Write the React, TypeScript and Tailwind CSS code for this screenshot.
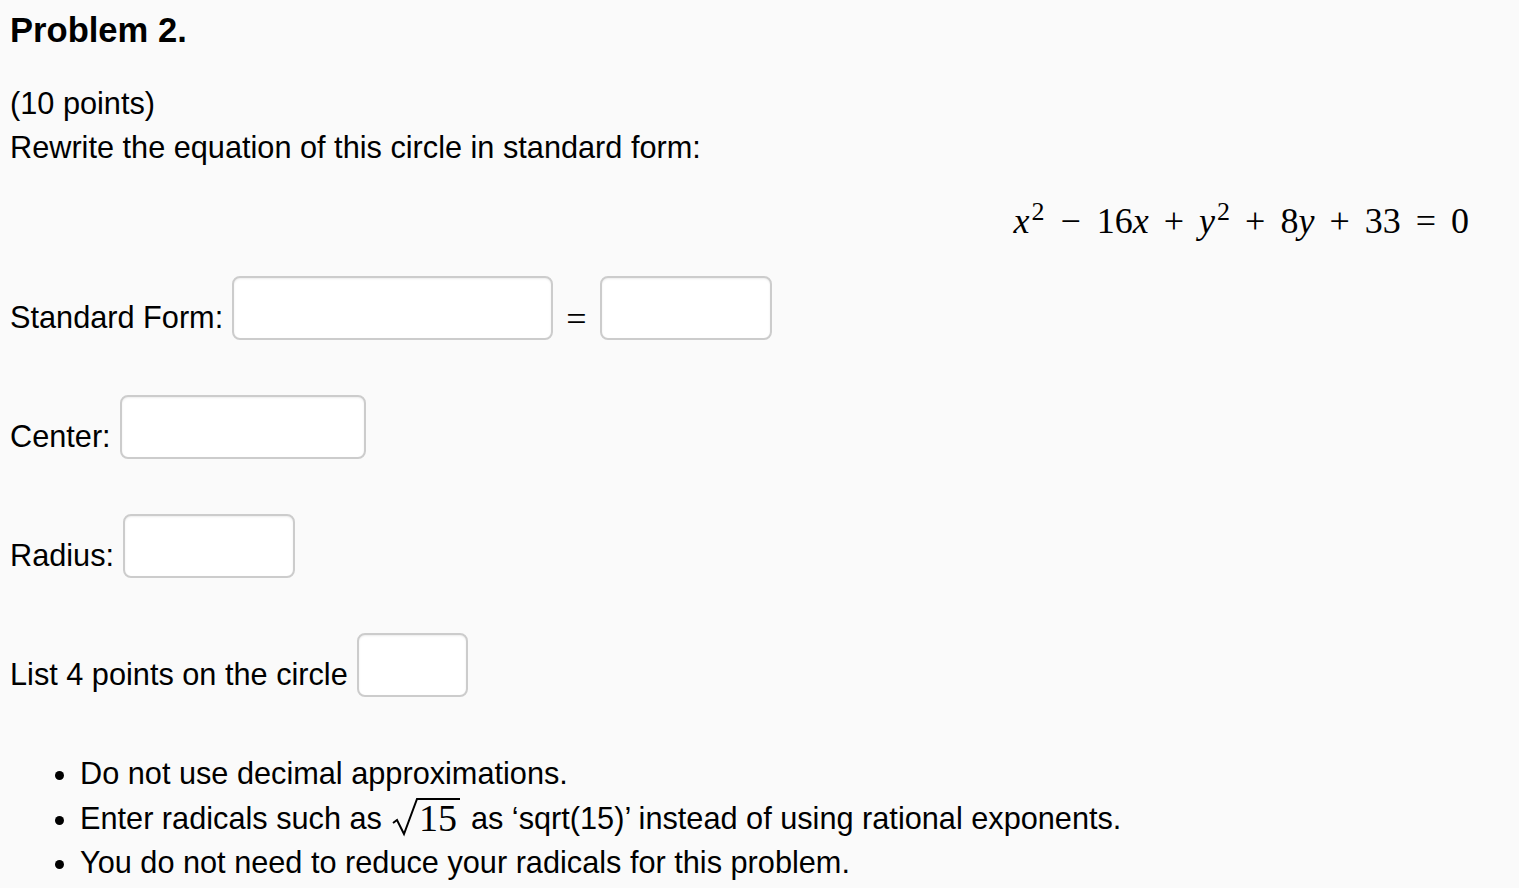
const serif = "font-['Liberation_Serif',serif]";

const Box = ({ w }: { w: string }) => (
  <input
    type="text"
    className={`${w} h-[64px] rounded-[8px] border-2 border-[#cccccc] bg-white shadow-[inset_0_1px_2px_rgba(0,0,0,0.08)] outline-none`}
  />
);

const Row = ({ label, children }: { label: string; children: React.ReactNode }) => (
  <div className="flex items-end">
    <span className="leading-[44px] mr-[9px]">{label}</span>
    {children}
  </div>
);

const Sup = ({ children }: { children: React.ReactNode }) => (
  <span className="text-[26px] relative -top-[13px] ml-[2px]">{children}</span>
);

const Equation = () => (
  <div className={`${serif} text-[36px] leading-none flex items-baseline`}>
    <i>x</i>
    <Sup>2</Sup>
    <span className="mx-[16px]">−</span>
    <span>16</span>
    <i>x</i>
    <span className="mx-[15px]">+</span>
    <i>y</i>
    <Sup>2</Sup>
    <span className="mx-[15px]">+</span>
    <span>8</span>
    <i>y</i>
    <span className="mx-[15px]">+</span>
    <span>33</span>
    <span className="mx-[15px]">=</span>
    <span>0</span>
  </div>
);

const Sqrt15 = () => (
  <span className="inline-flex items-end align-[-8px] ml-[9px] mr-[11px]">
    <svg width="28" height="40" viewBox="0 0 28 40" className="-mr-[1px]">
      <path d="M2 26 L6 23 L13 37 L26 2 L28 2" fill="none" stroke="#000" strokeWidth="2" />
    </svg>
    <span className={`${serif} text-[38px] leading-[37px] border-t-2 border-black pl-[1px] pr-[3px]`}>15</span>
  </span>
);

export default function App() {
  return (
    <div className="min-h-screen bg-[#fafafa] text-black font-['Liberation_Sans',Arial,sans-serif] text-[30.7px] pl-[10px] pt-[10px]">
      <h2 className="font-bold text-[34.6px] leading-[40px]">Problem 2.</h2>

      <div className="mt-[32px] leading-[44px]">
        <p>(10 points)</p>
        <p>Rewrite the equation of this circle in standard form:</p>
      </div>

      <div className="flex justify-end pr-[50px] mt-[33px]">
        <Equation />
      </div>

      <div className="mt-[37px] flex flex-col gap-[55px]">
        <Row label="Standard Form:">
          <Box w="w-[321px]" />
          <span className={`${serif} text-[36px] leading-[52px] mx-[13px] translate-y-[5px]`}>=</span>
          <Box w="w-[172px]" />
        </Row>
        <Row label="Center:">
          <Box w="w-[246px]" />
        </Row>
        <Row label="Radius:">
          <Box w="w-[172px]" />
        </Row>
        <Row label="List 4 points on the circle">
          <Box w="w-[111px]" />
        </Row>
      </div>

      <ul className="list-disc pl-[70px] mt-[55px] leading-[44.5px]">
        <li>Do not use decimal approximations.</li>
        <li>
          Enter radicals such as
          <Sqrt15 />
          as ‘sqrt(15)’ instead of using rational exponents.
        </li>
        <li>You do not need to reduce your radicals for this problem.</li>
      </ul>
    </div>
  );
}
